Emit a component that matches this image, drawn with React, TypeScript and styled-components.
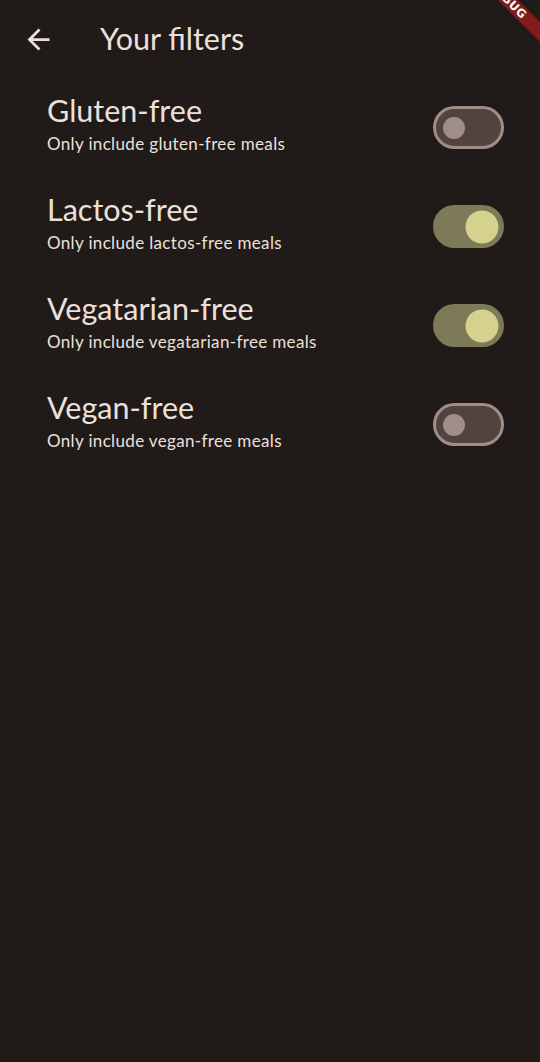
import { FC, useState } from "react";
import styled, { createGlobalStyle } from "styled-components";

interface FilterEntity {
    key: string;
    title: string;
    subtitle: string;
}

const filters: FilterEntity[] = [
    { key: "gluten", title: "Gluten-free", subtitle: "Only include gluten-free meals" },
    { key: "lactos", title: "Lactos-free", subtitle: "Only include lactos-free meals" },
    { key: "vegetarian", title: "Vegatarian-free", subtitle: "Only include vegatarian-free meals" },
    { key: "vegan", title: "Vegan-free", subtitle: "Only include vegan-free meals" },
];

const GlobalStyle = createGlobalStyle`
  html, body {
    margin: 0;
    padding: 0;
    background: #201a18;
  }
  body {
    font-family: Lato, "Noto Sans", sans-serif;
    color: #ece0db;
  }
`;

const Page = styled.div`
  position: relative;
  width: 540px;
  min-height: 1062px;
  background: #201a18;
  overflow: hidden;
`;

const AppBar = styled.div`
  display: flex;
  align-items: center;
  height: 78px;
  padding-left: 5px;
`;

const BackButton = styled.button`
  display: flex;
  align-items: center;
  justify-content: center;
  width: 66px;
  height: 66px;
  padding: 0;
  border: none;
  background: transparent;
  color: #ece0db;
  cursor: pointer;
`;

const AppTitle = styled.div`
  margin-left: 29px;
  margin-top: -2px;
  font-size: 30.5px;
  line-height: 1;
`;

const List = styled.div`
  display: flex;
  flex-direction: column;
`;

const Row = styled.div`
  display: flex;
  align-items: center;
  justify-content: space-between;
  height: 99px;
  padding: 0 36px 0 47px;
  cursor: pointer;
`;

const Texts = styled.div`
  display: flex;
  flex-direction: column;
  gap: 9.5px;
  margin-top: -8px;
`;

const Title = styled.div`
  font-size: 30.5px;
  line-height: 32px;
`;

const Subtitle = styled.div`
  font-size: 17px;
  line-height: 18px;
  letter-spacing: 0.35px;
`;

const Track = styled.div<{ $on: boolean }>`
  position: relative;
  box-sizing: border-box;
  width: 71px;
  height: 43px;
  border-radius: 22px;
  border: 3px solid ${(p) => (p.$on ? "#7c7a57" : "#a08d87")};
  background: ${(p) => (p.$on ? "#7c7a57" : "#51443f")};
`;

const Thumb = styled.div<{ $on: boolean }>`
  position: absolute;
  top: 50%;
  left: ${(p) => (p.$on ? "46px" : "18px")};
  width: ${(p) => (p.$on ? "33px" : "22px")};
  height: ${(p) => (p.$on ? "33px" : "22px")};
  border-radius: 50%;
  transform: translate(-50%, -50%);
  background: ${(p) => (p.$on ? "#d5d28f" : "#a08d87")};
`;

const Banner = styled.div`
  position: absolute;
  top: -7px;
  left: 448px;
  width: 120px;
  height: 14px;
  transform: rotate(45deg);
  background: rgba(183, 28, 28, 0.66);
  color: #ffffff;
  font-family: "DejaVu Sans", sans-serif;
  font-weight: 900;
  font-size: 11.5px;
  line-height: 14px;
  text-align: center;
  letter-spacing: 0.5px;
`;

const ArrowBack: FC = () => (
    <svg width="33" height="33" viewBox="0 0 24 24" fill="currentColor">
        <path d="M20 11H7.83l5.59-5.59L12 4l-8 8 8 8 1.41-1.41L7.83 13H20v-2z" />
    </svg>
);

export default function App() {
    const [values, setValues] = useState<Record<string, boolean>>({
        gluten: false,
        lactos: true,
        vegetarian: true,
        vegan: false,
    });

    const toggle = (key: string) => {
        setValues({ ...values, [key]: !values[key] });
    };

    return (
        <Page>
            <GlobalStyle />
            <AppBar>
                <BackButton aria-label="Back">
                    <ArrowBack />
                </BackButton>
                <AppTitle>Your filters</AppTitle>
            </AppBar>
            <List>
                {filters.map((f) => (
                    <Row key={f.key} onClick={() => toggle(f.key)}>
                        <Texts>
                            <Title>{f.title}</Title>
                            <Subtitle>{f.subtitle}</Subtitle>
                        </Texts>
                        <Track $on={values[f.key]}>
                            <Thumb $on={values[f.key]} />
                        </Track>
                    </Row>
                ))}
            </List>
            <Banner>DEBUG</Banner>
        </Page>
    );
}
